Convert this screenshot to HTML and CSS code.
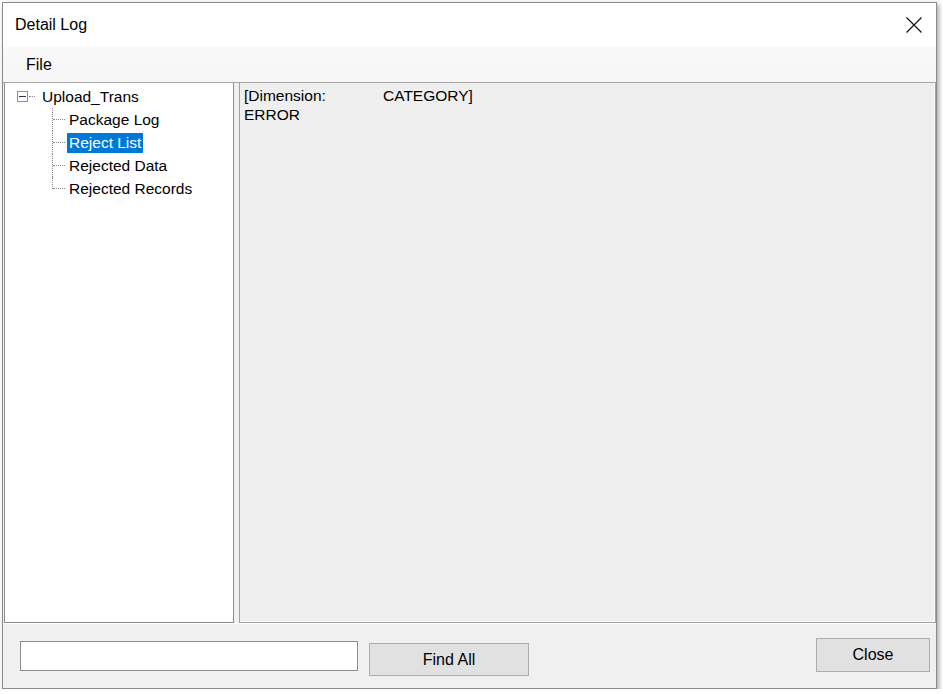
FILE: index.html
```html
<!DOCTYPE html>
<html lang="en">
<head>
	<meta charset="UTF-8">
	<title>Detail Log</title>
	<link rel="stylesheet" href="styles.css">
</head>
<body>
	<div class="window">
		<div class="titlebar">
			<span class="title">Detail Log</span>
			<svg class="close-x" width="16" height="16" viewBox="0 0 16 16">
				<path d="M0.5 0.5 L15.5 15.5 M15.5 0.5 L0.5 15.5" stroke="#111" stroke-width="1.2" fill="none"/>
			</svg>
		</div>
		<div class="menubar">
			<span class="menu-item">File</span>
		</div>
		<div class="content">
			<div class="tree">
				<div class="node root">
					<span class="toggle"><span class="minus"></span></span>
					<span class="stub"></span>
					<span class="label">Upload_Trans</span>
				</div>
				<div class="children">
					<div class="node child">
						<span class="branch"></span>
						<span class="label">Package Log</span>
					</div>
					<div class="node child">
						<span class="branch"></span>
						<span class="label selected">Reject List</span>
					</div>
					<div class="node child">
						<span class="branch"></span>
						<span class="label">Rejected Data</span>
					</div>
					<div class="node child">
						<span class="branch last"></span>
						<span class="label">Rejected Records</span>
					</div>
				</div>
			</div>
			<div class="detail">
				<div class="line"><span class="field">[Dimension:</span>CATEGORY]</div>
				<div class="line">ERROR</div>
			</div>
		</div>
		<div class="footer">
			<input type="text" class="search" value="">
			<button class="btn find">Find All</button>
			<button class="btn close">Close</button>
		</div>
	</div>
</body>
</html>
```

FILE: styles.css
```css
body{
	margin: 0;
	background: #fff;
	font-family: "Liberation Sans", Arial, sans-serif;
	font-size: 15.5px;
	color: #000;
}
.window{
	margin: 2px 0 0 2px;
	width: 935px;
	height: 687px;
	box-sizing: border-box;
	border: 1px solid #8c8c8c;
	box-shadow: 2px 2px 5px rgba(0,0,0,0.35);
	background: #f0f0f0;
	display: flex;
	flex-direction: column;
}
.titlebar{
	height: 44px;
	background: #fff;
	display: flex;
	align-items: center;
	justify-content: space-between;
	padding: 0 14px 0 12px;
}
.title{
	font-size: 16px;
}
.close-x{
	margin-top: -1px;
}
.menubar{
	height: 36px;
	box-sizing: border-box;
	background: linear-gradient(#f9f9f9, #f6f6f6);
	border-bottom: 1px solid #a8a8a8;
	display: flex;
	align-items: center;
	padding-left: 23px;
}
.menu-item{
	font-size: 16px;
}
.content{
	height: 540px;
	display: flex;
	gap: 5px;
	padding-left: 1px;
	box-sizing: border-box;
}
.tree{
	width: 230px;
	box-sizing: border-box;
	background: #fff;
	border: 1px solid #8e8e8e;
	border-top: none;
	padding: 2px 0 0 12px;
}
.node{
	display: flex;
	align-items: center;
	height: 23px;
}
.toggle{
	width: 11px;
	height: 11px;
	box-sizing: border-box;
	border: 1px solid #919191;
	display: flex;
	align-items: center;
	justify-content: center;
	margin-top: -1px;
}
.minus{
	width: 7px;
	height: 1px;
	background: #2d2d7a;
}
.stub{
	width: 6px;
	margin: 0 5px 0 1px;
	border-top: 1px dotted #8a8a8a;
}
.children{
	margin-left: 35px;
}
.branch{
	width: 13px;
	height: 23px;
	box-sizing: border-box;
	border-left: 1px dotted #8a8a8a;
	display: flex;
	align-items: center;
}
.branch::after{
	content: "";
	width: 12px;
	border-top: 1px dotted #8a8a8a;
}
.branch.last{
	height: 12px;
	align-self: flex-start;
	align-items: flex-end;
}
.label{
	padding: 1px 2px 2px 2px;
	line-height: 17px;
}
.child .label{
	margin-left: 2px;
}
.selected{
	background: #0078d7;
	color: #fff;
}
.detail{
	width: 697px;
	box-sizing: border-box;
	background: #efefef;
	border: 1px solid #a0a0a0;
	border-top: none;
	box-shadow: inset 0 -1px 0 #fff, inset -1px 0 0 #fff;
	padding: 3px 4px;
}
.line{
	line-height: 19px;
	white-space: nowrap;
}
.field{
	display: inline-block;
	width: 139px;
}
.footer{
	flex: 1;
	display: flex;
	align-items: flex-start;
	padding: 0 6px 0 17px;
	border-top: 1px solid #fff;
}
.search{
	margin: 17px 0 0 0;
	width: 338px;
	height: 30px;
	box-sizing: border-box;
	border: 1px solid #8c8c8c;
	background: #fff;
	padding: 0;
}
.btn{
	font-family: "Liberation Sans", Arial, sans-serif;
	font-size: 16px;
	color: #000;
	background: #e1e1e1;
	border: 1px solid #adadad;
	box-sizing: border-box;
	padding: 0;
}
.find{
	margin: 19px 0 0 11px;
	width: 160px;
	height: 33px;
}
.close{
	margin: 14px 0 0 auto;
	width: 114px;
	height: 34px;
}
```
